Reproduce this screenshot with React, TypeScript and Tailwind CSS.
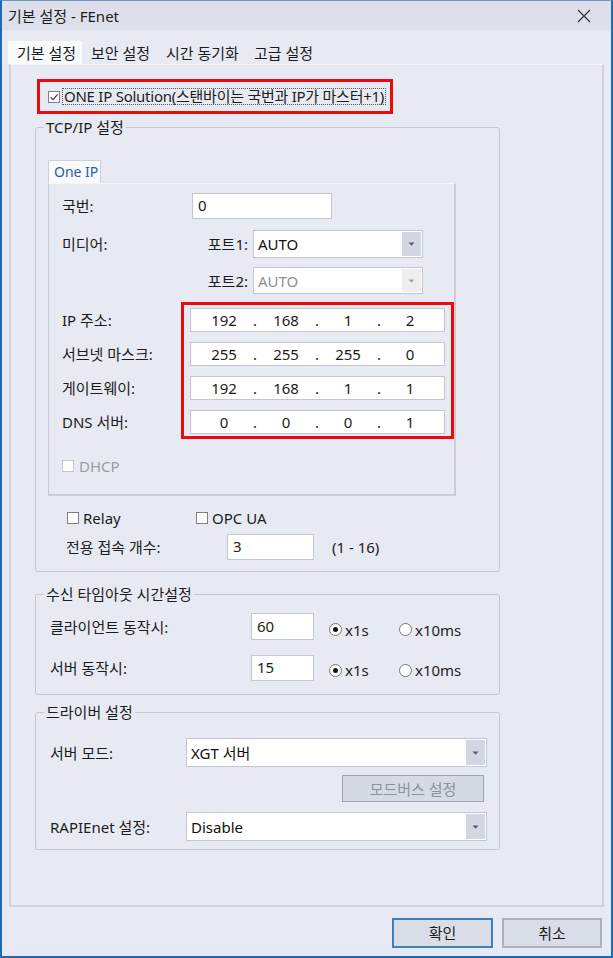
import React from "react";

const Arrow = ({ disabled }: { disabled?: boolean }) => (
  <svg width="7" height="4" viewBox="0 0 7 4">
    <path d="M0.5 0.5h6L3.5 3.8z" fill={disabled ? "#a3a5ab" : "#5a5d63"} />
  </svg>
);

function Select({
  value,
  disabled,
  w,
  h,
}: {
  value: string;
  disabled?: boolean;
  w: string;
  h: string;
}) {
  return (
    <div className={`${w} ${h} flex items-stretch border border-[#c4c7cf] bg-white p-[1px]`}>
      <div className={`flex-1 flex items-center pl-[3px] ${disabled ? "text-[#8d8f94]" : "text-[#111]"}`}>
        {value}
      </div>
      <div
        className={`w-[19px] flex items-center justify-center ${disabled ? "bg-[#eeeef1]" : "bg-[#d3d7e2]"}`}
      >
        <Arrow disabled={disabled} />
      </div>
    </div>
  );
}

function Check({ checked, disabled }: { checked?: boolean; disabled?: boolean }) {
  return (
    <div
      className={`w-[12px] h-[12px] shrink-0 bg-white border flex items-center justify-center ${
        disabled ? "border-[#c6c8ce]" : "border-[#7c7f86]"
      }`}
    >
      {checked && (
        <svg width="10" height="10" viewBox="0 0 10 10">
          <path d="M1.6 5.2 L4 7.6 L8.6 2.4" fill="none" stroke="#3a3c40" strokeWidth="1.2" />
        </svg>
      )}
    </div>
  );
}

function Radio({ checked }: { checked?: boolean }) {
  return (
    <div className="w-[13px] h-[13px] shrink-0 rounded-full bg-white border border-[#74777d] flex items-center justify-center">
      {checked && <div className="w-[5px] h-[5px] rounded-full bg-[#111]" />}
    </div>
  );
}

function IpBox({ parts }: { parts: string[] }) {
  return (
    <div className="w-[255px] h-[24px] border border-[#c4c7cf] bg-white flex items-center pl-[5px]">
      {parts.map((p, i) => (
        <React.Fragment key={i}>
          <div className="w-[56px] text-center">{p}</div>
          {i < 3 && <div className="w-[6px] text-center">.</div>}
        </React.Fragment>
      ))}
    </div>
  );
}

function TextBox({ value, w, h }: { value: string; w: string; h: string }) {
  return (
    <div className={`${w} ${h} border border-[#c4c7cf] bg-white flex items-center pl-[5px] pb-[2px]`}>
      {value}
    </div>
  );
}

function Group({
  title,
  className,
  children,
}: {
  title: string;
  className?: string;
  children: React.ReactNode;
}) {
  return (
    <fieldset className={`w-[465px] border border-[#c3c6cf] rounded-[3px] ${className ?? ""}`}>
      <legend className="ml-[8px] px-[2px] leading-[18px]">{title}</legend>
      {children}
    </fieldset>
  );
}

export default function App() {
  return (
    <div className="w-[613px] h-[958px] flex flex-col bg-[#e8eaf3] border-x-2 border-b-2 border-t border-[#1b6cb3] border-t-[#7396bd] text-[15px] leading-[18px] text-[#1c1c1c] font-['Noto_Sans','Noto_Sans_CJK_KR',sans-serif] overflow-hidden">
      {/* title bar */}
      <div className="h-[29px] shrink-0 bg-[#dde0ea] flex items-center justify-between pl-[6px] pr-[20px]">
        <span>기본 설정 - FEnet</span>
        <svg width="14" height="14" viewBox="0 0 14 14">
          <path d="M1 1L13 13M13 1L1 13" stroke="#333" strokeWidth="1.2" />
        </svg>
      </div>

      {/* tabs */}
      <div className="flex h-[23px] mt-[11px] pl-[6px] shrink-0 whitespace-nowrap">
        <div className="w-[74px] pl-[9px] bg-[#fafbfd] flex items-center">기본 설정</div>
        <div className="w-[75px] pl-[9px] flex items-center">보안 설정</div>
        <div className="w-[88px] pl-[9px] flex items-center">시간 동기화</div>
        <div className="w-[75px] pl-[9px] flex items-center">고급 설정</div>
      </div>

      {/* tab panel */}
      <div className="mx-[7px] h-[843px] shrink-0 border-t border-t-[#f7f8fb] border-x-2 border-b-2 border-x-[#cfd2db] border-b-[#cfd2db] px-[24px] pt-[14px] flex flex-col">
        <div className="ml-[2px] w-[356px] h-[35px] border-[3px] border-[#ee0a0a] flex items-center pl-[8px]">
          <Check checked />
          <div className="ml-[2px] border border-dotted border-[#555] px-[1px] leading-[15px] whitespace-nowrap tracking-[-0.25px]">
            ONE IP Solution(스탠바이는 국번과 IP가 마스터+1)
          </div>
        </div>

        {/* TCP/IP */}
        <Group title="TCP/IP 설정" className="mt-[4px]">
          <div className="pl-[12px] pt-[24px] pb-[11px]">
            <div className="w-[53px] h-[23px] bg-[#fafbfd] border-t border-x border-[#cdd0d8] text-[#1d5ea6] text-[14px] flex items-center pl-[5px] whitespace-nowrap">
              One IP
            </div>
            <div className="w-[408px] h-[313px] border-t border-t-[#f5f6fa] border-l border-l-[#c8cbd4] border-r-2 border-b-2 border-r-[#cbced7] border-b-[#cbced7] pl-[13px] pt-[9px]">
              <div className="flex items-center h-[26px]">
                <div className="w-[130px]">국번:</div>
                <TextBox value="0" w="w-[140px]" h="h-[26px]" />
              </div>
              <div className="flex items-center h-[28px] mt-[11px]">
                <div className="w-[191px] flex justify-between pr-[5px]">
                  <span>미디어:</span>
                  <span>포트1:</span>
                </div>
                <Select value="AUTO" w="w-[170px]" h="h-[28px]" />
              </div>
              <div className="flex items-center h-[27px] mt-[9px]">
                <div className="w-[191px] flex justify-end pr-[5px]">포트2:</div>
                <Select value="AUTO" disabled w="w-[170px]" h="h-[27px]" />
              </div>
              <div className="flex mt-[8px]">
                <div className="w-[121px] pt-[6px] flex flex-col gap-[10px] whitespace-nowrap">
                  <div className="h-[24px] flex items-center">IP 주소:</div>
                  <div className="h-[24px] flex items-center">서브넷 마스크:</div>
                  <div className="h-[24px] flex items-center">게이트웨이:</div>
                  <div className="h-[24px] flex items-center">DNS 서버:</div>
                </div>
                <div className="w-[273px] shrink-0 border-[3px] border-[#ee0a0a] pl-[6px] pt-[3px] pb-[2px] flex flex-col gap-[10px]">
                  <IpBox parts={["192", "168", "1", "2"]} />
                  <IpBox parts={["255", "255", "255", "0"]} />
                  <IpBox parts={["192", "168", "1", "1"]} />
                  <IpBox parts={["0", "0", "0", "1"]} />
                </div>
              </div>
              <div className="flex items-center mt-[20px] h-[13px]">
                <Check disabled />
                <span className="ml-[5px] text-[#9b9da2]">DHCP</span>
              </div>
            </div>

            <div className="flex items-center h-[12px] mt-[16px] ml-[19px]">
              <div className="w-[129px] flex items-center">
                <Check />
                <span className="ml-[4px]">Relay</span>
              </div>
              <div className="flex items-center">
                <Check />
                <span className="ml-[4px]">OPC UA</span>
              </div>
            </div>
            <div className="flex items-center mt-[10px] ml-[18px]">
              <div className="w-[161px] whitespace-nowrap">전용 접속 개수:</div>
              <TextBox value="3" w="w-[87px]" h="h-[26px]" />
              <span className="ml-[18px]">(1 - 16)</span>
            </div>
          </div>
        </Group>

        {/* timeout */}
        <Group title="수신 타임아웃 시간설정" className="mt-[13px]">
          <div className="pl-[14px] pt-[10px] pb-[13px]">
            <div className="flex items-center">
              <div className="w-[201px] whitespace-nowrap">클라이언트 동작시:</div>
              <TextBox value="60" w="w-[63px]" h="h-[27px]" />
              <div className="flex items-center ml-[15px] mt-[6px]">
                <div className="w-[70px] flex items-center">
                  <Radio checked />
                  <span className="ml-[3px]">x1s</span>
                </div>
                <div className="flex items-center">
                  <Radio />
                  <span className="ml-[3px]">x10ms</span>
                </div>
              </div>
            </div>
            <div className="flex items-center mt-[15px]">
              <div className="w-[201px]">서버 동작시:</div>
              <TextBox value="15" w="w-[63px]" h="h-[26px]" />
              <div className="flex items-center ml-[15px] mt-[4px]">
                <div className="w-[70px] flex items-center">
                  <Radio checked />
                  <span className="ml-[3px]">x1s</span>
                </div>
                <div className="flex items-center">
                  <Radio />
                  <span className="ml-[3px]">x10ms</span>
                </div>
              </div>
            </div>
          </div>
        </Group>

        {/* driver */}
        <Group title="드라이버 설정" className="mt-[8px]">
          <div className="pl-[14px] pt-[17px] pb-[8px]">
            <div className="flex items-center">
              <div className="w-[136px]">서버 모드:</div>
              <Select value="XGT 서버" w="w-[301px]" h="h-[29px]" />
            </div>
            <div className="w-[437px] flex justify-end mt-[8px]">
              <div className="mr-[3px] w-[142px] h-[27px] bg-[#d6dae5] border border-[#9ea2ac] text-[#8e9198] flex items-center justify-center">
                모드버스 설정
              </div>
            </div>
            <div className="flex items-center mt-[10px]">
              <div className="w-[136px] whitespace-nowrap">RAPIEnet 설정:</div>
              <Select value="Disable" w="w-[301px]" h="h-[29px]" />
            </div>
          </div>
        </Group>
      </div>

      {/* buttons */}
      <div className="flex justify-end gap-[9px] pr-[9px] mt-[11px]">
        <div className="w-[101px] h-[30px] bg-[#d9dde8] border-2 border-[#3f7fbc] flex items-center justify-center">
          확인
        </div>
        <div className="w-[100px] h-[30px] bg-[#d9dde8] border-2 border-[#aeb1ba] flex items-center justify-center">
          취소
        </div>
      </div>
    </div>
  );
}
